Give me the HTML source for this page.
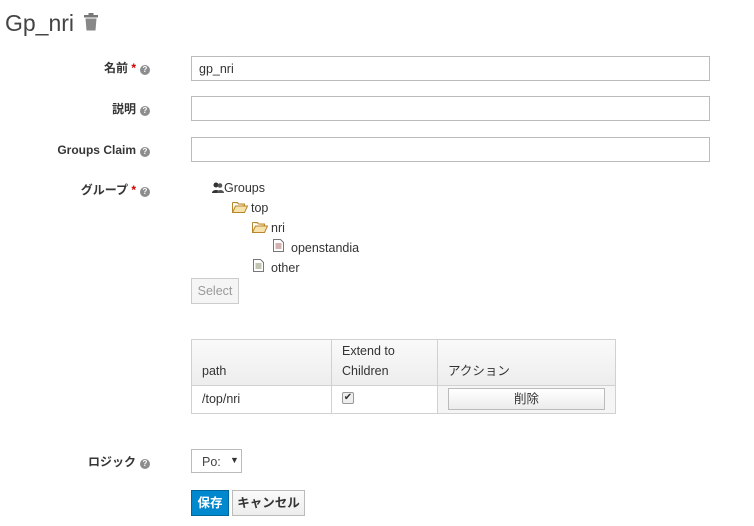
<!DOCTYPE html>
<html><head><meta charset="utf-8"><style>
body{margin:0;width:754px;height:526px;background:#fff;font-family:"Liberation Sans","Noto Sans CJK JP",sans-serif;color:#333;position:relative;overflow:hidden;font-size:12.5px}
.a{position:absolute}
.lbl{position:absolute;right:604px;font-weight:bold;font-size:12px;white-space:nowrap;line-height:14px;color:#363636}
.q{display:inline-block;width:10px;height:10px;border-radius:50%;background:#8b8d8f;color:#fff;font-size:8px;line-height:10px;text-align:center;vertical-align:0px;margin-left:4px;font-weight:bold}
.s{color:#c00}
.in{position:absolute;left:191px;width:517px;height:23px;border:1px solid #bbb;box-sizing:content-box}
.t{position:absolute;font-size:12.5px;line-height:14px}
</style></head><body>
<div class="a" style="left:5px;top:8px;font-size:23px;color:#444;line-height:30px">Gp_nri</div>
<svg class="a" style="left:84px;top:13px" width="14" height="18" viewBox="0 0 14 18"><rect x="0" y="2" width="14" height="2.5" fill="#777"/><rect x="4.5" y="0" width="5" height="2.5" fill="#777"/><path d="M1.5 5.5h11l-1 12h-9z" fill="#888"/></svg>

<div class="lbl" style="top:61px">名前 <span class="s">*</span><span class="q">?</span></div>
<div class="in" style="top:56px"><span style="position:absolute;left:7px;top:5px;font-size:12.5px">gp_nri</span></div>
<div class="lbl" style="top:102px">説明<span class="q">?</span></div>
<div class="in" style="top:96px"></div>
<div class="lbl" style="top:143px">Groups Claim<span class="q">?</span></div>
<div class="in" style="top:137px"></div>
<div class="lbl" style="top:183px">グループ <span class="s">*</span><span class="q">?</span></div>

<svg class="a" style="left:212px;top:182px" width="12" height="11"><circle cx="4" cy="3" r="2.5" fill="#333"/><path d="M0 11c0-4 8-4 8 0z" fill="#333"/><circle cx="8" cy="3.5" r="2.3" fill="#555"/><path d="M5 11c0-4 7-4 7 0z" fill="#555"/></svg>
<div class="t" style="left:224px;top:181px">Groups</div>
<svg class="a" style="left:232px;top:201px" width="16" height="12"><path d="M0.5 1.5h5l1 1.5h6v2" fill="#f2d89a" stroke="#b8862b"/><path d="M0.5 1.5v10h12l3-6.5h-12l-3 6.5" fill="#f7e2ab" stroke="#b8862b"/></svg>
<div class="t" style="left:251px;top:201px">top</div>
<svg class="a" style="left:252px;top:221px" width="16" height="12"><path d="M0.5 1.5h5l1 1.5h6v2" fill="#f2d89a" stroke="#b8862b"/><path d="M0.5 1.5v10h12l3-6.5h-12l-3 6.5" fill="#f7e2ab" stroke="#b8862b"/></svg>
<div class="t" style="left:271px;top:221px">nri</div>
<svg class="a" style="left:273px;top:239px" width="11" height="13"><path d="M0.5 0.5h7l3 3v9h-10z" fill="#fff" stroke="#777"/><path d="M2.5 5h6M2.5 7h6M2.5 9h6" stroke="#a66"/></svg>
<div class="t" style="left:291px;top:241px">openstandia</div>
<svg class="a" style="left:253px;top:259px" width="11" height="13"><path d="M0.5 0.5h7l3 3v9h-10z" fill="#fff" stroke="#777"/><path d="M2.5 5h6M2.5 7h6M2.5 9h6" stroke="#886"/></svg>
<div class="t" style="left:271px;top:261px">other</div>
<div class="a" style="left:191px;top:278px;width:46px;height:24px;border:1px solid #ccc;background:#f5f5f5;color:#999;text-align:center;line-height:24px">Select</div>

<div class="a" style="left:191px;top:339px;width:423px;height:73px;border:1px solid #d1d1d1"></div>
<div class="a" style="left:192px;top:340px;width:423px;height:45px;background:linear-gradient(#fafafa,#ededed);border-bottom:1px solid #d1d1d1"></div>
<div class="a" style="left:331px;top:340px;width:1px;height:73px;background:#d1d1d1"></div>
<div class="a" style="left:437px;top:340px;width:1px;height:73px;background:#d1d1d1"></div>
<div class="a" style="left:438px;top:386px;width:177px;height:27px;background:#f5f5f5"></div>
<div class="t" style="left:202px;top:364px">path</div>
<div class="t" style="left:342px;top:341px;line-height:20px">Extend to<br>Children</div>
<div class="t" style="left:448px;top:364px">アクション</div>
<div class="t" style="left:202px;top:392px">/top/nri</div>
<div class="a" style="left:342px;top:392px;width:10px;height:10px;border:1px solid #999;border-radius:2px;background:#eee;font-size:10px;line-height:10px;text-align:center">✔</div>
<div class="a" style="left:448px;top:388px;width:155px;height:20px;border:1px solid #bbb;background:linear-gradient(#fff,#ececec);text-align:center;line-height:20px">削除</div>

<div class="lbl" style="top:455px">ロジック<span class="q">?</span></div>
<div class="a" style="left:191px;top:449px;width:51px;height:24px;border:1px solid #bbb;box-sizing:border-box"><span style="position:absolute;left:10px;top:5px;color:#444">Po:</span><span style="position:absolute;left:38px;top:5px;font-size:9px">▼</span></div>
<div class="a" style="left:191px;top:490px;width:38px;height:26px;background:#0088ce;border:1px solid #00659c;box-sizing:border-box;color:#fff;font-weight:bold;text-align:center;line-height:24px">保存</div>
<div class="a" style="left:232px;top:490px;width:73px;height:26px;background:linear-gradient(#fafafa,#ededed);border:1px solid #bbb;box-sizing:border-box;font-weight:bold;text-align:center;line-height:24px">キャンセル</div>
</body></html>
